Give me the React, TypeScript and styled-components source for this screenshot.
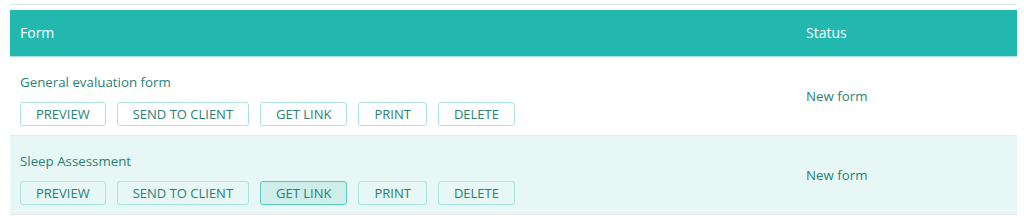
import styled, { createGlobalStyle } from "styled-components";

const GlobalStyle = createGlobalStyle`
  body {
    margin: 0;
    background: #fff;
    font-family: "Open Sans", "Noto Sans", sans-serif;
  }
`;

type FormRowType = {
  name: string;
  status: string;
  activeAction?: string;
};

const actions = ["PREVIEW", "SEND TO CLIENT", "GET LINK", "PRINT", "DELETE"];

const forms: FormRowType[] = [
  { name: "General evaluation form", status: "New form" },
  { name: "Sleep Assessment", status: "New form", activeAction: "GET LINK" },
];

const App = () => {
  return (
    <>
      <GlobalStyle />
      <Page>
        <TopRule />
        <Table>
          <thead>
            <tr>
              <HeadCell>Form</HeadCell>
              <HeadCell $width={221}>Status</HeadCell>
            </tr>
          </thead>
          <tbody>
            {forms.map((form, i) => (
              <Row key={form.name} $striped={i % 2 === 1}>
                <Cell>
                  <FormName>{form.name}</FormName>
                  <ActionBox>
                    {actions.map((action) => (
                      <ActionButton
                        key={action}
                        $active={action === form.activeAction}
                      >
                        {action}
                      </ActionButton>
                    ))}
                  </ActionBox>
                </Cell>
                <StatusCell>
                  <StatusText>{form.status}</StatusText>
                </StatusCell>
              </Row>
            ))}
          </tbody>
        </Table>
      </Page>
    </>
  );
};

const Page = styled.div`
  padding: 4px 7px 0 10px;
`;

const TopRule = styled.div`
  height: 0;
  border-top: 1px solid #e2e6e6;
  margin-bottom: 5px;
`;

const Table = styled.table`
  width: 100%;
  border-collapse: collapse;
  border-spacing: 0;
`;

const HeadCell = styled.th<{ $width?: number }>`
  height: 46px;
  padding: 0 10px;
  box-sizing: border-box;
  width: ${({ $width }) => ($width ? `${$width}px` : "auto")};
  background: #22b8b0;
  border-bottom: 1px solid #a3e2db;
  color: #fff;
  font-size: 14px;
  font-weight: 400;
  text-align: left;
  vertical-align: middle;
`;

const Row = styled.tr<{ $striped: boolean }>`
  background: ${({ $striped }) => ($striped ? "#e6f7f5" : "#fff")};
  border-bottom: 1px solid #e4ebea;
`;

const Cell = styled.td`
  height: 78px;
  box-sizing: border-box;
  padding: 16px 10px 9px;
  vertical-align: middle;
`;

const StatusCell = styled(Cell)`
  padding: 0 10px 2px;
`;

const FormName = styled.div`
  color: #2a7f76;
  font-size: 13.3px;
  line-height: 18px;
`;

const ActionBox = styled.div`
  display: flex;
  flex-direction: row;
  gap: 11px;
  margin-top: 11px;
`;

const ActionButton = styled.button<{ $active: boolean }>`
  height: 24px;
  padding: 0 15px;
  border: 1px solid ${({ $active }) => ($active ? "#5ecbbf" : "#a9e4dd")};
  border-radius: 3px;
  background: ${({ $active }) => ($active ? "#cdeeea" : "transparent")};
  color: #2a7f76;
  font-family: "Open Sans", "Noto Sans", sans-serif;
  font-size: 13px;
  line-height: 22px;
  cursor: pointer;
`;

const StatusText = styled.span`
  color: #2a7f76;
  font-size: 13.3px;
`;

export default App;
